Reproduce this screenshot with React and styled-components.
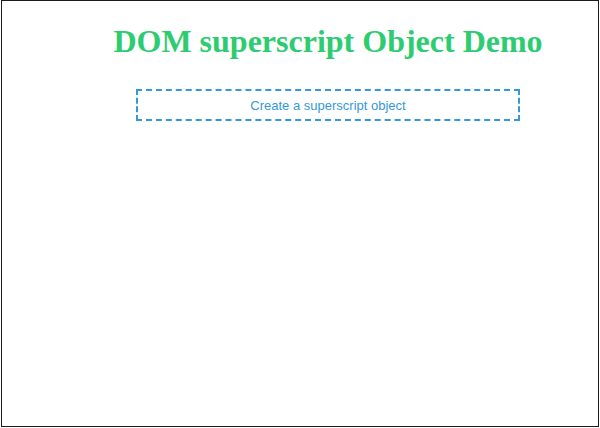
import styled, { createGlobalStyle } from 'styled-components';

const GlobalStyle = createGlobalStyle`
  html, body {
    margin: 0;
    padding: 0;
    background: #ffffff;
  }
`;

const Frame = styled.div`
  box-sizing: border-box;
  width: 598px;
  height: 427px;
  margin-left: 1px;
  border: 1px solid #1a1a1a;
  padding-left: 56px;
`;

const Content = styled.div`
  display: flex;
  flex-direction: column;
  align-items: center;
`;

const Title = styled.h1`
  margin: 22px 0 0;
  font-family: "Liberation Serif", "Times New Roman", serif;
  font-size: 32px;
  font-weight: bold;
  color: #2ecc71;
  line-height: 36px;
`;

const Button = styled.div`
  box-sizing: border-box;
  width: 384px;
  height: 32px;
  margin-top: 30px;
  border: 2px dashed #3498db;
  display: flex;
  align-items: center;
  justify-content: center;
  font-family: "Liberation Sans", Arial, sans-serif;
  font-size: 13px;
  color: #3498db;
`;

export default function App() {
  return (
    <>
      <GlobalStyle />
      <Frame>
        <Content>
          <Title>DOM superscript Object Demo</Title>
          <Button>Create a superscript object</Button>
        </Content>
      </Frame>
    </>
  );
}
